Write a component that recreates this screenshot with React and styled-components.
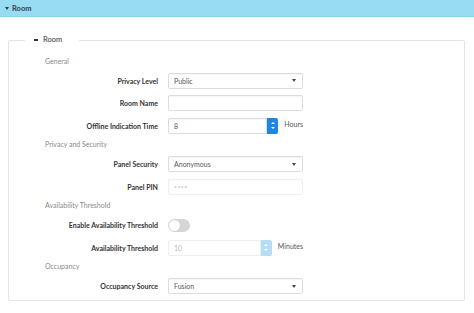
import React from "react";
import styled, { createGlobalStyle } from "styled-components";

const Global = createGlobalStyle`
  html, body { margin: 0; padding: 0; background: #fff; }
  body { font-family: Lato, "Open Sans", sans-serif; color: #333; }
  * { box-sizing: border-box; }
`;

const Header = styled.div`
  height: 17px;
  background: #98dcf4;
  border-bottom: 1px solid #8dd2ea;
  box-shadow: 0 2px 2px rgba(150, 200, 220, 0.12);
  display: flex;
  align-items: center;
  padding-left: 5px;
  gap: 3px;
  font-size: 7.5px;
  font-weight: 700;
  color: #2f3e48;
`;

const Caret = styled.span`
  width: 0;
  height: 0;
  border-left: 2px solid transparent;
  border-right: 2px solid transparent;
  border-top: 3px solid ${(p) => p.$color || "#2f3e48"};
  display: inline-block;
`;

const Fieldset = styled.fieldset`
  margin: 18px 9px 0 8px;
  padding: 0 0 6px 0;
  border: 1px solid #e4e4e4;
  border-radius: 2px;
  min-width: 0;
`;

const Legend = styled.legend`
  margin-left: 16px;
  padding: 0 17px 0 9px;
  font-size: 7.5px;
  color: #333;
  display: flex;
  align-items: center;
  gap: 5px;
  line-height: 10px;
`;

const Minus = styled.span`
  display: inline-block;
  width: 4px;
  height: 1.2px;
  background: #333;
`;

const Form = styled.div`
  display: flex;
  flex-direction: column;
  gap: 6.5px;
  padding-top: 11.5px;
`;

const SectionTitle = styled.div`
  height: 9.5px;
  line-height: 9.5px;
  padding-left: 36px;
  font-size: 7px;
  color: #8a8a8a;
`;

const Row = styled.div`
  display: grid;
  grid-template-columns: 149px 135px;
  column-gap: 10px;
  align-items: center;
  height: 16px;
`;

const Label = styled.label`
  text-align: right;
  font-size: 7px;
  font-weight: 700;
  color: #333;
`;

const Box = styled.div`
  height: 16px;
  border: 1px solid ${(p) => (p.$disabled ? "#efefef" : "#dcdcdc")};
  border-radius: 2px;
  background: #fff;
  display: flex;
  align-items: center;
  padding: 0 5px;
  font-size: 7px;
  color: ${(p) => (p.$disabled ? "#b8b8b8" : "#555")};
  flex: 1;
  min-width: 0;
  box-shadow: ${(p) => (p.$disabled ? "none" : "inset 0 1px 1px rgba(0,0,0,0.04)")};
`;

const SelectBox = styled(Box)`
  justify-content: space-between;
  padding-right: 6px;
`;

const Dots = styled.span`
  font-size: 5px;
  letter-spacing: 0.5px;
  color: #cfcfcf;
`;

const Group = styled.div`
  display: flex;
  align-items: flex-start;
  height: 16px;
`;

const Spinner = styled.div`
  width: 11px;
  height: 16px;
  background: ${(p) => (p.$disabled ? "#b7dcf5" : "#1c86e0")};
  border-radius: 0 2px 2px 0;
  display: flex;
  flex-direction: column;
  align-items: center;
  justify-content: space-around;
  padding: 3px 0;
`;

const Up = styled.span`
  width: 0;
  height: 0;
  border-left: 2px solid transparent;
  border-right: 2px solid transparent;
  border-bottom: 2.5px solid #fff;
`;

const Down = styled.span`
  width: 0;
  height: 0;
  border-left: 2px solid transparent;
  border-right: 2px solid transparent;
  border-top: 2.5px solid #fff;
`;

const Suffix = styled.span`
  margin-left: 6px;
  font-size: 7px;
  color: #555;
  line-height: 10px;
  margin-top: 1px;
`;

const Toggle = styled.div`
  width: 22px;
  height: 13px;
  border-radius: 7px;
  background: #d6d6d6;
  position: relative;
  &::after {
    content: "";
    position: absolute;
    left: 1px;
    top: 1px;
    width: 11px;
    height: 11px;
    border-radius: 50%;
    background: #fff;
    box-shadow: 0 0 1px rgba(0,0,0,0.15);
  }
`;

const Select = ({ value }) => (
  <SelectBox>
    <span>{value}</span>
    <Caret $color="#444" />
  </SelectBox>
);

const Spin = ({ value, unit, disabled }) => (
  <Group>
    <Box $disabled={disabled} style={{ borderRadius: "2px 0 0 2px" }}>{value}</Box>
    <Spinner $disabled={disabled}>
      <Up />
      <Down />
    </Spinner>
    <Suffix>{unit}</Suffix>
  </Group>
);

export default function App() {
  return (
    <>
      <Global />
      <Header>
        <Caret />
        <span>Room</span>
      </Header>
      <Fieldset>
        <Legend>
          <Minus />
          <span>Room</span>
        </Legend>
        <Form>
          <SectionTitle>General</SectionTitle>
          <Row>
            <Label>Privacy Level</Label>
            <Select value="Public" />
          </Row>
          <Row>
            <Label>Room Name</Label>
            <Box />
          </Row>
          <Row>
            <Label>Offline Indication Time</Label>
            <Spin value="8" unit="Hours" />
          </Row>
          <SectionTitle>Privacy and Security</SectionTitle>
          <Row>
            <Label>Panel Security</Label>
            <Select value="Anonymous" />
          </Row>
          <Row>
            <Label>Panel PIN</Label>
            <Box $disabled><Dots>••••</Dots></Box>
          </Row>
          <SectionTitle>Availability Threshold</SectionTitle>
          <Row>
            <Label>Enable Availability Threshold</Label>
            <Toggle />
          </Row>
          <Row>
            <Label>Availability Threshold</Label>
            <Spin value="10" unit="Minutes" disabled />
          </Row>
          <SectionTitle>Occupancy</SectionTitle>
          <Row>
            <Label>Occupancy Source</Label>
            <Select value="Fusion" />
          </Row>
        </Form>
      </Fieldset>
    </>
  );
}
